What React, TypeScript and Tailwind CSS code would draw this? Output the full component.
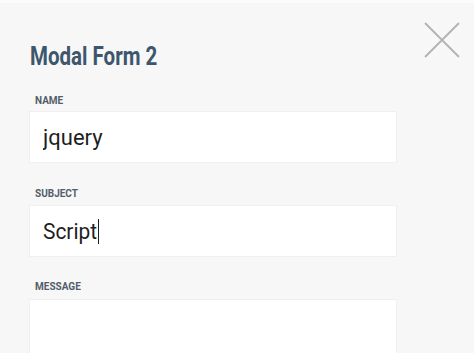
import { useState } from "react";

function CloseIcon() {
  return (
    <svg width="36" height="36" viewBox="0 0 36 36" className="block">
      <path d="M1 1 L35 35 M35 1 L1 35" stroke="#b3b3b3" strokeWidth="1.8" fill="none" />
    </svg>
  );
}

export default function App() {
  const [name, setName] = useState("jquery");
  const [message, setMessage] = useState("");

  const label = "block pl-[5px] text-[10px] leading-[14px] font-bold uppercase text-[#525e6b]";
  const field =
    "block w-[366px] h-[50px] bg-white px-[13px] text-[22px] text-[#1e1e1e] outline-none shadow-[0_0_0_1px_#f0f0f0]";

  return (
    <div className="w-[474px] h-[353px] overflow-hidden bg-[#f7f7f7] border-t-[3px] border-[#fbfbfb] font-['Roboto',sans-serif]">
      <div className="relative pl-[30px] pt-[39px]">
        <button className="absolute right-[14px] top-[19px] p-0 bg-transparent">
          <CloseIcon />
        </button>
        <h2 className="text-[25px] leading-[30px] font-bold text-[#3d566d] origin-left scale-x-[0.82] whitespace-nowrap">
          Modal Form 2
        </h2>
        <div className="mt-[22px]">
          <label className={label}>Name</label>
          <input className={`${field} mt-[4px]`} value={name} onChange={(e) => setName(e.target.value)} />
        </div>
        <div className="mt-[25px]">
          <label className={label}>Subject</label>
          {/* focused field, caret drawn so it shows in a still */}
          <div className={`${field} mt-[5px] flex items-center`}>
            <span className="origin-left scale-x-[0.95]">Script</span>
            <span className="-ml-[2px] w-[1px] h-[25px] bg-[#1e1e1e]" />
          </div>
        </div>
        <div className="mt-[24px]">
          <label className={label}>Message</label>
          <textarea
            className={`${field} mt-[6px] h-[80px] resize-none`}
            value={message}
            onChange={(e) => setMessage(e.target.value)}
          />
        </div>
      </div>
    </div>
  );
}
